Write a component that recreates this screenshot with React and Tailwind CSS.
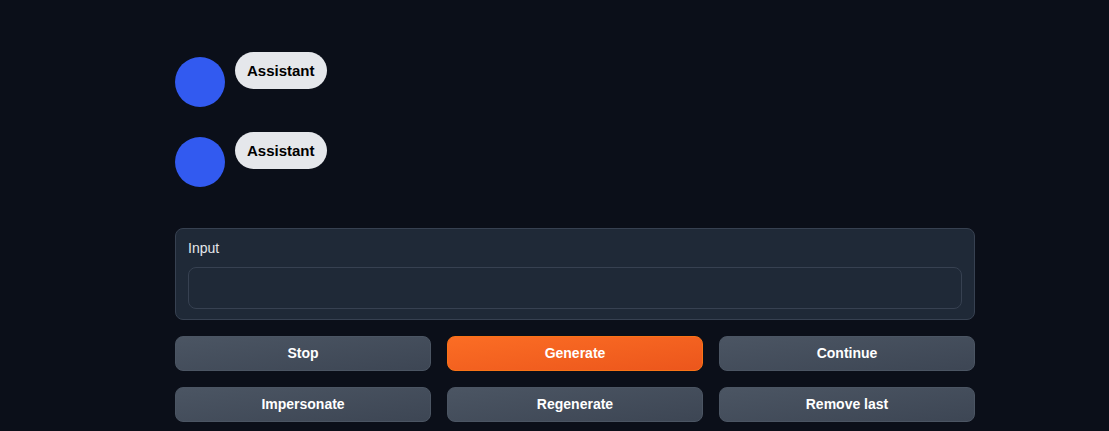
export default function App() {
  const messages = ['Assistant', 'Assistant'];
  const rows = [
    [
      { label: 'Stop' },
      { label: 'Generate', primary: true },
      { label: 'Continue' },
    ],
    [{ label: 'Impersonate' }, { label: 'Regenerate' }, { label: 'Remove last' }],
  ];

  return (
    <div className="min-h-screen bg-[#0b0f19] font-['Liberation_Sans',Arial,sans-serif]">
      <div className="ml-[175px] w-[800px] pt-[52px]">
        <div className="flex flex-col gap-[25px]">
          {messages.map((m, i) => (
            <div key={i} className="flex items-start gap-[10px]">
              <div className="mt-[5px] h-[50px] w-[50px] rounded-full bg-[#325af0]" />
              <div className="flex h-[37px] items-center rounded-full bg-[#e5e7eb] px-[12px] pt-[1px] text-[15px] font-bold text-black">
                {m}
              </div>
            </div>
          ))}
        </div>

        <div className="mt-[41px] rounded-lg border border-[#374151] bg-[#1f2937] px-[12px] pb-[10px] pt-[10px]">
          <div className="text-[14px] leading-[18px] text-[#e5e7eb]">Input</div>
          <div className="mt-[10px] h-[42px] rounded-lg border border-[#374151] bg-[#1f2937]" />
        </div>

        <div className="mt-[16px] flex flex-col gap-[16px]">
          {rows.map((row, i) => (
            <div key={i} className="grid grid-cols-3 gap-[16px]">
              {row.map((b) => (
                <button
                  key={b.label}
                  className={
                    b.primary
                      ? 'h-[35px] rounded-lg border border-[#f97316] bg-gradient-to-br from-[#fb6d24] to-[#ec561c] text-[14px] font-bold text-white'
                      : 'h-[35px] rounded-lg border border-[#4b5563] bg-gradient-to-br from-[#4b5563] to-[#3d4654] text-[14px] font-bold text-white'
                  }
                >
                  {b.label}
                </button>
              ))}
            </div>
          ))}
        </div>
      </div>
    </div>
  );
}
